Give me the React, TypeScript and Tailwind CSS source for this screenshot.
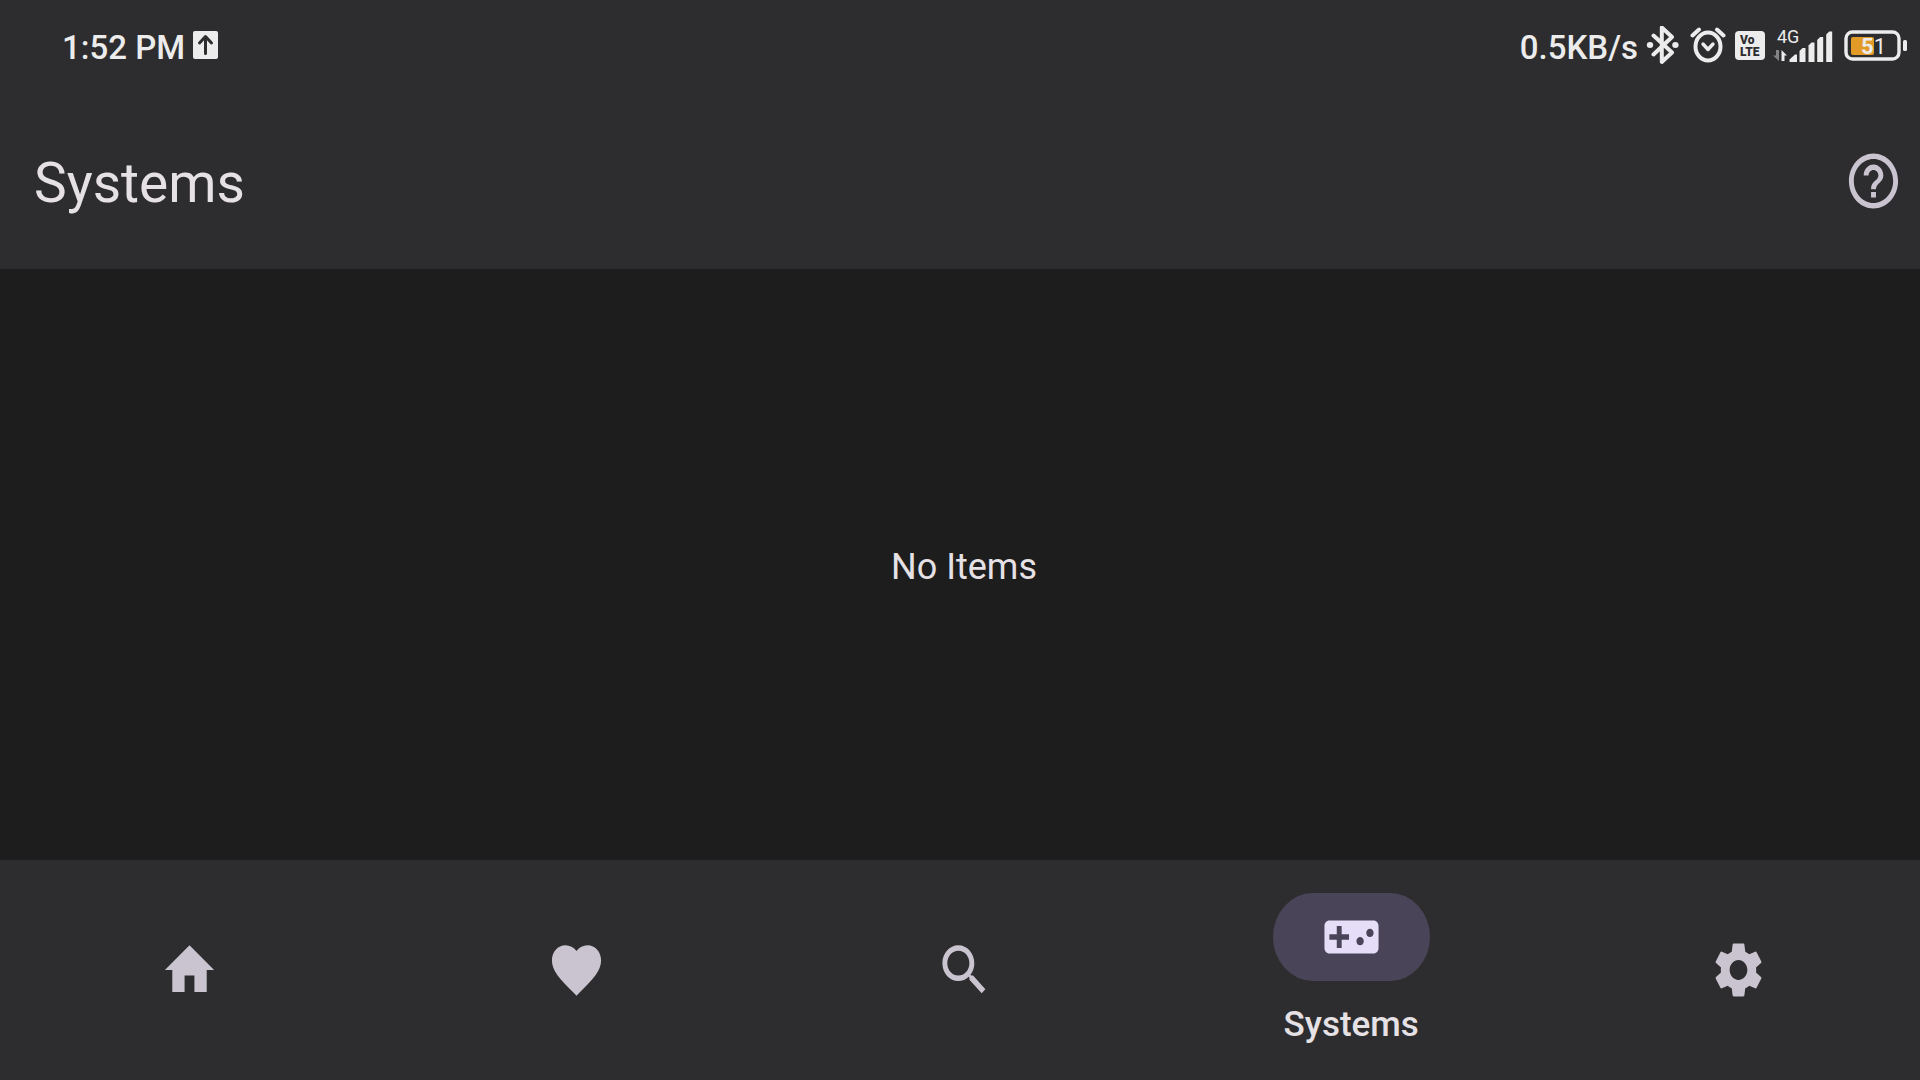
import type { ReactNode } from "react";

const NAV_ITEMS = [
  {
    id: "home",
    label: "Home",
    path: "M10 20v-6h4v6h5v-8h3L12 3 2 12h3v8z",
  },
  {
    id: "favorites",
    label: "Favorites",
    path: "M12 21.35l-1.45-1.32C5.4 15.36 2 12.28 2 8.5 2 5.42 4.42 3 7.5 3c1.74 0 3.41.81 4.5 2.09C13.09 3.81 14.76 3 16.5 3 19.58 3 22 5.42 22 8.5c0 3.78-3.4 6.86-8.55 11.54L12 21.35z",
  },
  {
    id: "search",
    label: "Search",
    path: "M15.5 14h-.79l-.28-.27C15.41 12.59 16 11.11 16 9.5 16 5.91 13.09 3 9.5 3S3 5.91 3 9.5 5.91 16 9.5 16c1.61 0 3.09-.59 4.23-1.57l.27.28v.79l5 4.99L20.49 19l-4.99-5zm-6 0C7.01 14 5 11.99 5 9.5S7.01 5 9.5 5 14 7.01 14 9.5 11.99 14 9.5 14z",
  },
  {
    id: "systems",
    label: "Systems",
    path: "M21 6H3c-1.1 0-2 .9-2 2v8c0 1.1.9 2 2 2h18c1.1 0 2-.9 2-2V8c0-1.1-.9-2-2-2zm-10 7H8v3H6v-3H3v-2h3V8h2v3h3v2zm4.5 2c-.83 0-1.5-.67-1.5-1.5s.67-1.5 1.5-1.5 1.5.67 1.5 1.5-.67 1.5-1.5 1.5zm4-3c-.83 0-1.5-.67-1.5-1.5S18.67 9 19.5 9s1.5.67 1.5 1.5-.67 1.5-1.5 1.5z",
  },
  {
    id: "settings",
    label: "Settings",
    path: "M19.14 12.94c.04-.3.06-.61.06-.94 0-.32-.02-.64-.07-.94l2.03-1.58c.18-.14.23-.41.12-.61l-1.92-3.32c-.12-.22-.37-.29-.59-.22l-2.39.96c-.5-.38-1.03-.7-1.62-.94l-.36-2.54c-.04-.24-.24-.41-.48-.41h-3.84c-.24 0-.43.17-.47.41l-.36 2.54c-.59.24-1.13.57-1.62.94l-2.39-.96c-.22-.08-.47 0-.59.22L2.74 8.87c-.12.21-.08.47.12.61l2.03 1.58c-.05.3-.09.63-.09.94s.02.64.07.94l-2.03 1.58c-.18.14-.23.41-.12.61l1.92 3.32c.12.22.37.29.59.22l2.39-.96c.5.38 1.03.7 1.62.94l.36 2.54c.05.24.24.41.48.41h3.84c.24 0 .44-.17.47-.41l.36-2.54c.59-.24 1.13-.56 1.62-.94l2.39.96c.22.08.47 0 .59-.22l1.92-3.32c.12-.22.07-.47-.12-.61l-2.01-1.58zM12 15.6c-1.98 0-3.6-1.62-3.6-3.6s1.62-3.6 3.6-3.6 3.6 1.62 3.6 3.6-1.62 3.6-3.6 3.6z",
  },
];

const HELP_PATH =
  "M11 18h2v-2h-2v2zm1-16C6.48 2 2 6.48 2 12s4.48 10 10 10 10-4.48 10-10S17.52 2 12 2zm0 18c-4.41 0-8-3.59-8-8s3.59-8 8-8 8 3.59 8 8-3.59 8-8 8zm0-14c-2.21 0-4 1.79-4 4h2c0-1.1.9-2 2-2s2 .9 2 2c0 2-3 1.75-3 5h2c0-2.25 3-2.5 3-5 0-2.21-1.79-4-4-4z";

function Icon({ path }: { path: string }) {
  return (
    <svg
      viewBox="0 0 24 24"
      preserveAspectRatio="none"
      fill="currentColor"
      className="h-[66px] w-[59px]"
      aria-hidden="true"
    >
      <path d={path} />
    </svg>
  );
}

function StatusIcon({ width, children }: { width: number; children: ReactNode }) {
  return (
    <svg
      width={width}
      height="40"
      viewBox={`0 0 ${width} 40`}
      fill="none"
      stroke="currentColor"
      strokeLinecap="round"
      strokeLinejoin="round"
      aria-hidden="true"
    >
      {children}
    </svg>
  );
}

function UploadIcon() {
  return (
    <StatusIcon width={25}>
      <rect y="5" width="25" height="28" rx="2" fill="currentColor" stroke="none" />
      <path d="M12.5 27.5V11M6.5 17l6-6.5 6 6.5" stroke="#2d2d2f" strokeWidth="3" />
    </StatusIcon>
  );
}

function BluetoothIcon() {
  return (
    <StatusIcon width={36}>
      <path d="M7.5 9.500L26 26.500 15.800 36V1.500L26 11 7.500 28.500" strokeWidth="4" />
      <ellipse cx="4" cy="19" rx="3.2" ry="3" fill="currentColor" stroke="none" />
      <ellipse cx="29.4" cy="19" rx="3.2" ry="3" fill="currentColor" stroke="none" />
    </StatusIcon>
  );
}

function AlarmIcon() {
  return (
    <StatusIcon width={37}>
      <ellipse cx="18" cy="20.5" rx="12.5" ry="14" strokeWidth="4" />
      <path d="M2.5 9.5L9 3.500M33.500 9.5l-6.500-6" strokeWidth="4" />
      <path d="M13 18l5 5.500 5-5.500" strokeWidth="3.4" />
    </StatusIcon>
  );
}

function VolteIcon() {
  return (
    <StatusIcon width={30}>
      <rect y="5" width="30" height="29" rx="4" fill="currentColor" stroke="none" />
      <g
        fill="#2d2d2f"
        stroke="none"
        fontFamily="Roboto, sans-serif"
        fontWeight="900"
      >
        <text x="5" y="18" fontSize="12">
          Vo
        </text>
        <text x="5" y="30" fontSize="12">
          LTE
        </text>
      </g>
    </StatusIcon>
  );
}

function SignalIcon() {
  return (
    <StatusIcon width={62}>
      <text x="4" y="17" fontSize="18" fill="currentColor" stroke="none">
        4G
      </text>
      <g fill="currentColor" stroke="none">
        <path d="M6 24v11L0 29.5h3V24z" opacity="0.45" />
        <path d="M8.500 35V24l5.500 5.500h-2.500V35z" />
        <path d="M16.500 33.500l5.500-5h2V36h-7.500z" />
        <path d="M26.500 25l3-3h3v14h-6z" />
        <path d="M35.500 19.500l3-3h3V36h-6z" />
        <path d="M44.200 14l3-3h3v25h-6z" />
        <path d="M53.200 8.500l3-3h3V36h-6z" />
      </g>
    </StatusIcon>
  );
}

function BatteryIcon() {
  return (
    <StatusIcon width={64}>
      <rect x="3" y="6" width="53" height="27" rx="6.5" strokeWidth="3.4" />
      <rect x="8" y="11" width="23" height="18" rx="2" fill="#e39b28" stroke="none" />
      <rect x="60" y="14" width="4" height="11" rx="1.5" fill="currentColor" stroke="none" />
      <text x="18" y="28" fontSize="22" fill="currentColor" stroke="none">
        <tspan fontWeight="700">5</tspan>
        <tspan>1</tspan>
      </text>
    </StatusIcon>
  );
}

function StatusBar() {
  return (
    <div className="flex h-[94px] items-center justify-between pr-[13px] pb-[2px] pl-[62px] text-[33px] leading-10 font-medium text-[#ececec]">
      <div className="flex items-center gap-2">
        <span className="pt-1">1:52 PM</span>
        <UploadIcon />
      </div>
      <div className="flex items-center gap-2">
        <span className="pt-1">0.5KB/s</span>
        <div className="flex items-center gap-2 font-normal">
          <BluetoothIcon />
          <AlarmIcon />
          <VolteIcon />
          <SignalIcon />
          <BatteryIcon />
        </div>
      </div>
    </div>
  );
}

export default function App() {
  const current = "systems";

  return (
    <div className="flex min-h-screen flex-col bg-[#1d1d1e] font-['Roboto',sans-serif] text-[#e6e1e5]">
      <header className="bg-[#2d2d2f]">
        <StatusBar />
        <div className="flex h-[175px] items-center justify-between pr-[17px] pb-[2px] pl-[34px]">
          <h1 className="pt-1 text-[55px] leading-[64px]">Systems</h1>
          <button type="button" aria-label="Help" className="text-[#cac4d0]">
            <Icon path={HELP_PATH} />
          </button>
        </div>
      </header>

      <main className="flex flex-1 items-center justify-center pt-1 pl-2">
        <p className="text-4xl">No Items</p>
      </main>

      <nav className="flex h-[220px] gap-6 bg-[#2d2d2f] pl-2">
        {NAV_ITEMS.map((item) =>
          item.id === current ? (
            <button
              key={item.id}
              type="button"
              aria-current="page"
              className="flex flex-1 flex-col items-center justify-center gap-[22px]"
            >
              <span className="flex h-[88px] w-[157px] items-center justify-center rounded-[40px/44px] bg-[#4a4458] text-[#e6def8]">
                <Icon path={item.path} />
              </span>
              <span className="text-[35px] leading-[44px] font-medium">
                {item.label}
              </span>
            </button>
          ) : (
            <button
              key={item.id}
              type="button"
              aria-label={item.label}
              className="flex flex-1 items-center justify-center text-[#cac4d0]"
            >
              <Icon path={item.path} />
            </button>
          ),
        )}
      </nav>
    </div>
  );
}
